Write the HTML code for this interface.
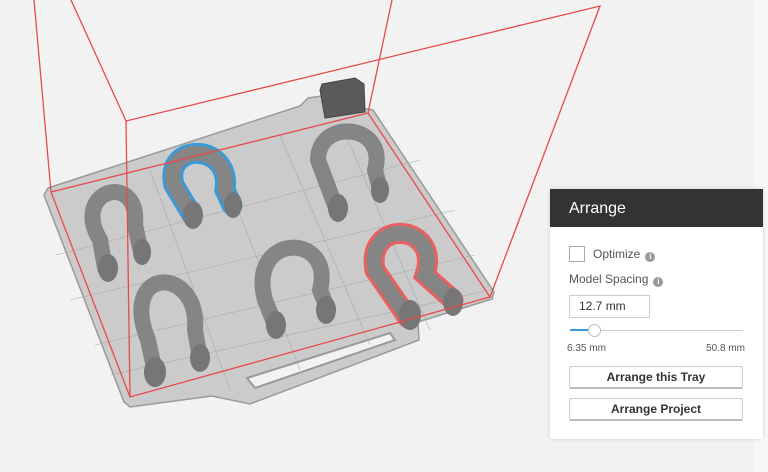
<!DOCTYPE html>
<html><head><style>
body{margin:0;width:768px;height:472px;overflow:hidden;background:#f2f2f2;font-family:"Liberation Sans",sans-serif;position:relative}
svg{position:absolute;left:0;top:0}
.panel{position:absolute;left:550px;top:189px;width:213px;height:250px;background:#fff;box-shadow:0 0 4px rgba(0,0,0,.15)}
.hd{height:38px;background:#333;color:#fff;font-size:16px;line-height:40px;padding-left:19px}
.t{position:absolute;font-size:12px;color:#555}
.info{display:inline-block;width:10px;height:10px;border-radius:50%;background:#999;color:#fff;font-size:8px;line-height:10px;text-align:center;font-weight:bold;vertical-align:-1px;margin-left:5px}
.btn{position:absolute;left:19px;width:172px;height:20px;border:1px solid #ccc;border-bottom:2px solid #bbb;border-radius:2px;font-weight:bold;font-size:12px;text-align:center;line-height:20px;color:#333;background:#fff}
</style></head><body>
<div style="position:absolute;right:0;top:0;width:14px;height:472px;background:#f7f7f7"></div>
<svg width="768" height="472">
<path d="M48,188 L300,106 L308,98 L322,96 L330,102 L373,110 L494,292 L492,299 L418,322 L419,340 L250,404 L212,396 L130,407 L124,402 L44,195 Z" fill="#cbcbcb" stroke="#9a9a9a" stroke-width="1.5"/>
<path d="M247,378 L390,333 L395,340 L255,388 Z" fill="#f2f2f2" stroke="#999" stroke-width="2"/>
<g stroke="#aaa" stroke-width="0.6" fill="none">
<path d="M56,255 L420,160 M70,300 L455,210 M95,345 L475,255 M110,375 L490,290"/>
<path d="M150,170 L230,390 M215,150 L300,370 M280,135 L370,345 M340,122 L430,330"/>
</g>
<path d="M322,84 L355,78 L364,84 L365,112 L325,118 L320,90 Z" fill="#5a5a5a" stroke="#444"/>
<g fill="none" stroke-linecap="round">
<g stroke="#858585" stroke-width="16">
<path d="M100,240 C70,190 140,170 135,225 L140,248"/>
<path d="M100,240 L105,268"/>
<path d="M148,340 C118,265 200,265 195,330 L200,358"/>
<path d="M148,340 L155,372"/>
<path d="M265,300 C247,232 335,232 320,290 L328,310"/>
<path d="M265,300 L275,325"/>
<path d="M318,160 C318,118 388,123 375,170 L380,190"/>
<path d="M318,160 L336,208"/>
</g>
<path d="M174,185 C163,142 232,142 225,190 L232,205" stroke="#3a9ad6" stroke-width="21"/>
<path d="M174,185 L192,215" stroke="#3a9ad6" stroke-width="21"/>
<path d="M174,185 C163,142 232,142 225,190 L232,205" stroke="#858585" stroke-width="15"/>
<path d="M174,185 L192,215" stroke="#858585" stroke-width="15"/>
<path d="M375,270 C365,218 442,223 425,275 L453,300" stroke="#e86060" stroke-width="21"/>
<path d="M375,270 L408,318" stroke="#e86060" stroke-width="21"/>
<path d="M375,270 C365,218 442,223 425,275 L453,300" stroke="#858585" stroke-width="15"/>
<path d="M375,270 L408,318" stroke="#858585" stroke-width="15"/>
</g>
<g fill="#767676">
<ellipse cx="108" cy="268" rx="10" ry="14"/><ellipse cx="142" cy="252" rx="9" ry="13"/>
<ellipse cx="155" cy="372" rx="11" ry="15"/><ellipse cx="200" cy="358" rx="10" ry="14"/>
<ellipse cx="276" cy="325" rx="10" ry="14"/><ellipse cx="326" cy="310" rx="10" ry="14"/>
<ellipse cx="338" cy="208" rx="10" ry="14"/><ellipse cx="380" cy="190" rx="9" ry="13"/>
<ellipse cx="193" cy="215" rx="10" ry="14"/><ellipse cx="233" cy="205" rx="9" ry="13"/>
<ellipse cx="410" cy="315" rx="11" ry="15"/><ellipse cx="453" cy="302" rx="10" ry="14"/>
</g>
<g stroke="#e84a4a" stroke-width="1.3" fill="none">
<path d="M51,192 L368,113 L490,297 L130,397 Z"/>
<path d="M51,192 L34,0 M130,397 L126,121 L71,0 M126,121 L600,6 L490,297 M368,113 L392,0"/>
</g>
</svg>
<div class="panel">
<div class="hd">Arrange</div>
<div style="position:absolute;left:19px;top:57px;width:14px;height:14px;border:1px solid #aaa"></div>
<div class="t" style="left:43px;top:58px">Optimize<span class="info">i</span></div>
<div class="t" style="left:19px;top:83px">Model Spacing<span class="info">i</span></div>
<div style="position:absolute;left:19px;top:106px;height:21px;border:1px solid #ccc;font-size:12px;line-height:21px;padding-left:9px;width:70px;color:#333">12.7 mm</div>
<div style="position:absolute;left:20px;top:141px;width:173px;height:1px;background:#ccc"></div>
<div style="position:absolute;left:20px;top:140px;width:24px;height:2px;background:#3a9ad6"></div>
<div style="position:absolute;left:38px;top:135px;width:11px;height:11px;border:1px solid #bbb;border-radius:50%;background:#fff"></div>
<div class="t" style="left:17px;top:154px;font-size:10px">6.35 mm</div>
<div class="t" style="right:18px;top:154px;font-size:10px">50.8 mm</div>
<div class="btn" style="top:177px">Arrange this Tray</div>
<div class="btn" style="top:209px">Arrange Project</div>
</div>
</body></html>
